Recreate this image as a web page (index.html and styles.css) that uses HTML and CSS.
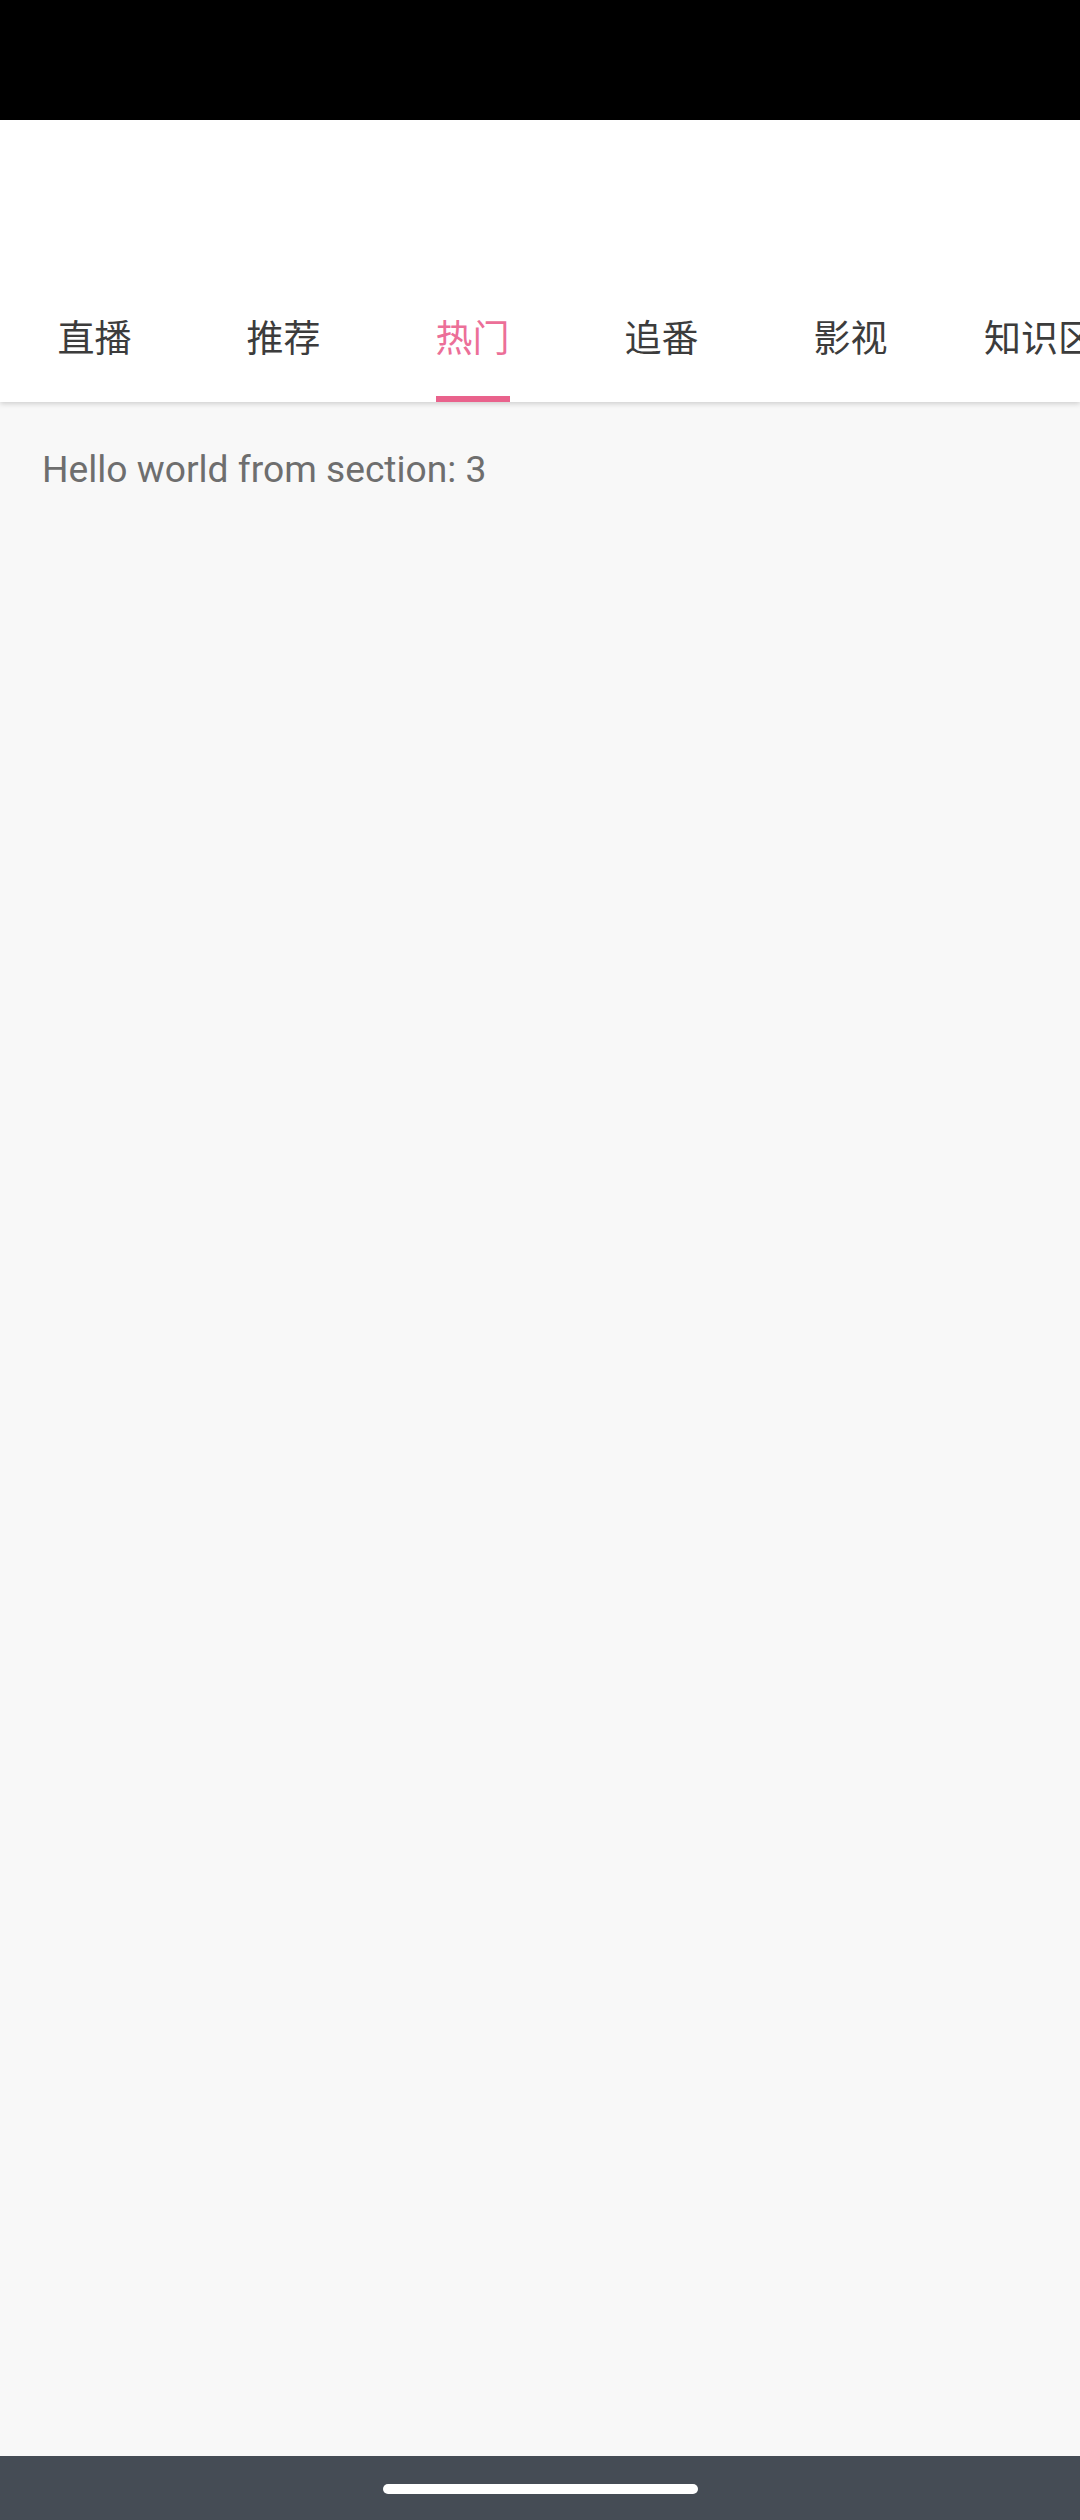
FILE: index.html
```html
<!DOCTYPE html>
<html lang="zh-CN">
<head>
    <meta charset="UTF-8">
    <meta name="viewport" content="width=device-width, initial-scale=1.0">
    <title>Tabs</title>
    <link rel="stylesheet" href="styles.css">
</head>
<body>
    <div class="status-bar"></div>
    <header class="app-bar">
        <div class="toolbar"></div>
        <nav class="tabs">
            <div class="tab">直播</div>
            <div class="tab">推荐</div>
            <div class="tab active"><span>热门</span></div>
            <div class="tab">追番</div>
            <div class="tab">影视</div>
            <div class="tab">知识区</div>
        </nav>
    </header>
    <main class="content">
        <p class="section-label">Hello world from section: 3</p>
    </main>
    <div class="nav-bar"><div class="handle"></div></div>
</body>
</html>
```
FILE: styles.css
```css
html, body { margin: 0; padding: 0; }
body { width: 1080px; height: 2520px; display: flex; flex-direction: column; overflow: hidden;
       font-family: Roboto, "Noto Sans CJK SC", sans-serif; background: #f8f8f8; }
.status-bar { height: 120px; background: #000; flex-shrink: 0; }
.app-bar { background: #fff; box-shadow: 0 2px 5px rgba(0, 0, 0, 0.16); position: relative; z-index: 1; flex-shrink: 0; }
.toolbar { height: 156px; }
.tabs { display: flex; height: 126px; overflow: hidden; white-space: nowrap; }
.tab { flex: 0 0 189px; display: flex; align-items: center; justify-content: center; padding-bottom: 6px; box-sizing: border-box;
       font-family: "Noto Sans CJK SC", sans-serif; font-size: 37px; color: #3c3c3c; }
.tab.active { color: #ec6f98; padding-bottom: 0; }
.tab.active span { position: relative; height: 100%; display: flex; align-items: center; padding-bottom: 6px; box-sizing: border-box; }
.tab.active span::after { content: ""; position: absolute; left: 0; right: 0; bottom: 0; height: 6px; background: #e9628c; }
.content { flex: 1; }
.section-label { margin: 0; padding: 46px 42px 0; font-size: 37.2px; line-height: 43px; color: #6e6e6e; }
.nav-bar { height: 64px; background: #454c55; display: flex; justify-content: center; padding-top: 28px; box-sizing: border-box; flex-shrink: 0; }
.handle { width: 315px; height: 10px; border-radius: 5px; background: #fff; }
```
